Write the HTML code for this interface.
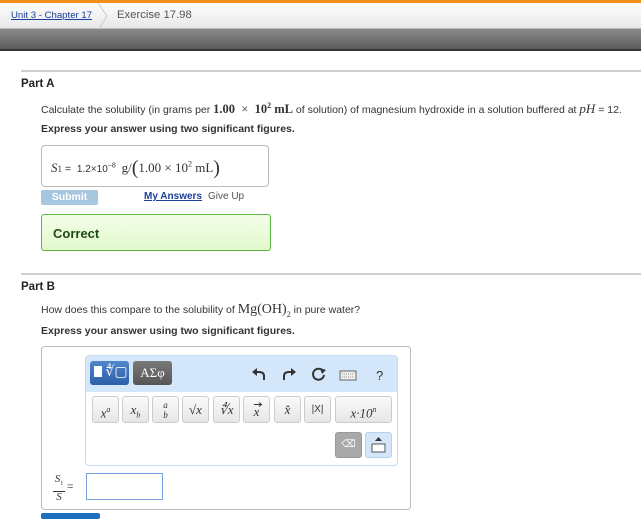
<!DOCTYPE html>
<html><head><style>
*{margin:0;padding:0;box-sizing:border-box}
body{width:641px;height:517px;overflow:hidden;background:#fff;font-family:"Liberation Sans",Arial,sans-serif;font-size:10.5px;color:#333;position:relative}
.a{position:absolute}
.serif{font-family:"Liberation Serif",serif}
.key{position:absolute;top:396px;height:27px;border:1px solid #ccc;border-radius:3px;background:linear-gradient(#fafafa,#e6e6e6);font-family:"Liberation Serif",serif;font-style:italic;font-size:13px;text-align:center;line-height:25px;color:#333}
</style></head><body>
<div class="a" style="left:0;top:0;width:641px;height:3px;background:#f39019"></div>
<div class="a" style="left:0;top:3px;width:641px;height:26px;background:linear-gradient(#fdfdfd,#e8e8e8);border-bottom:1px solid #bbb"></div>
<div class="a" style="left:11px;top:10px;font-size:9.6px;color:#1a3f9b;text-decoration:underline">Unit 3 - Chapter 17</div>
<svg class="a" style="left:96px;top:3px" width="14" height="27"><path d="M2 0 L11 13 L2 27" fill="none" stroke="#ccc" stroke-width="1"/></svg>
<div class="a" style="left:117px;top:9px;font-size:11.3px;color:#555">Exercise 17.98</div>
<div class="a" style="left:0;top:29px;width:641px;height:22px;background:linear-gradient(#8a8a8a,#5c5c5c);border-bottom:2px solid #333"></div>
<div class="a" style="left:21px;top:70px;width:620px;height:2px;background:#d0d0d0"></div>
<div class="a" style="left:21px;top:78px;font-weight:bold;font-size:11.5px;color:#222">Part A</div>
<div class="a" style="left:41px;top:101px;white-space:nowrap;font-size:10.5px">Calculate the solubility (in grams per <span class="serif" style="font-size:12.5px;font-weight:bold">1.00 &nbsp;<span style="font-weight:normal">×</span>&nbsp; 10<sup style="font-size:8px">2</sup> mL</span> of solution) of magnesium hydroxide in a solution buffered at <span class="serif" style="font-style:italic;font-size:13px">pH</span> = 12.</div>
<div class="a" style="left:41px;top:123px;font-weight:bold;color:#333">Express your answer using two significant figures.</div>
<div class="a" style="left:41px;top:145px;width:228px;height:42px;border:1px solid #bbb;border-radius:4px"></div>
<div class="a" style="left:51px;top:157px;white-space:nowrap"><span class="serif" style="font-style:italic;font-size:13px">S</span><span class="serif" style="font-size:9px">1</span> = &nbsp;<span style="font-size:10px">1.2×10<sup style="font-size:7px">−8</sup></span> &nbsp;<span class="serif" style="font-size:13px">g/<span style="font-size:20px;vertical-align:-2px">(</span>1.00 × 10<sup style="font-size:8px">2</sup> mL<span style="font-size:20px;vertical-align:-2px">)</span></span></div>
<div class="a" style="left:41px;top:190px;width:57px;height:15px;background:#a7c6e0;border-radius:2px;color:#fff;font-weight:bold;text-align:center;line-height:15px">Submit</div>
<div class="a" style="left:144px;top:191px;color:#1a3f9b;text-decoration:underline;font-weight:bold;font-size:10px">My Answers</div>
<div class="a" style="left:208px;top:191px;color:#555;font-size:10px">Give Up</div>
<div class="a" style="left:41px;top:214px;width:230px;height:37px;border:1px solid #5cb946;border-radius:3px;background:linear-gradient(#f3ffe8,#e2f8cc)"></div>
<div class="a" style="left:53px;top:226px;font-weight:bold;font-size:13px;color:#1d4a12">Correct</div>
<div class="a" style="left:21px;top:273px;width:620px;height:2px;background:#d0d0d0"></div>
<div class="a" style="left:21px;top:281px;font-weight:bold;font-size:11.5px;color:#222">Part B</div>
<div class="a" style="left:41px;top:302px;white-space:nowrap;font-size:10.5px">How does this compare to the solubility of <span class="serif" style="font-size:14px">Mg(OH)<sub style="font-size:8px">2</sub></span> in pure water?</div>
<div class="a" style="left:41px;top:325px;font-weight:bold;color:#333">Express your answer using two significant figures.</div>
<div class="a" style="left:41px;top:346px;width:370px;height:164px;border:1px solid #bbb;border-radius:4px"></div>
<div class="a" style="left:85px;top:355px;width:313px;height:111px;border:1px solid #c8dcef;border-radius:4px;background:#fff"></div>
<div class="a" style="left:86px;top:356px;width:311px;height:36px;background:#d3e6fa;border-radius:3px 3px 0 0"></div>
<div class="a" style="left:90px;top:361px;width:39px;height:24px;background:linear-gradient(#4f86cc,#2c5fa8);border-radius:3px;color:#fff;font-family:'Liberation Serif',serif;font-size:14px;line-height:24px;padding-left:4px"><span style="display:inline-block;width:8px;height:11px;background:#fff;vertical-align:-1px"></span> ∜▢</div>
<div class="a" style="left:133px;top:361px;width:39px;height:24px;background:linear-gradient(#7a7a7a,#555);border-radius:3px;color:#fff;font-family:'Liberation Serif',serif;font-size:13px;line-height:24px;text-align:center">ΑΣφ</div>
<svg class="a" style="left:250px;top:366px" width="140" height="18">
<path d="M14 14 V10 Q14 6 9 6 H5" fill="none" stroke="#333" stroke-width="2"/><path d="M2 6 L7 2 V10 Z" fill="#333"/>
<path d="M34 14 V10 Q34 6 39 6 H43" fill="none" stroke="#333" stroke-width="2"/><path d="M46 6 L41 2 V10 Z" fill="#333"/>
<path d="M73 5 A5.5 5.5 0 1 0 74 9" fill="none" stroke="#333" stroke-width="2"/><path d="M70 2 L76 4 L72 8 Z" fill="#333"/>
<rect x="90" y="5" width="16" height="9" fill="#eee" stroke="#666"/><path d="M92 8h12M92 11h12" stroke="#999" stroke-dasharray="1 1"/>
<text x="126" y="14" font-family="Liberation Sans" font-size="13" fill="#333">?</text>
</svg>
<div class="key" style="left:92px;width:27px">x<sup style="font-size:8px">a</sup></div>
<div class="key" style="left:122px;width:27px">x<sub style="font-size:8px">b</sub></div>
<div class="key" style="left:152px;width:27px;font-size:9px;line-height:10px;padding-top:3px">a<br>b</div>
<div class="key" style="left:182px;width:27px">√x</div>
<div class="key" style="left:213px;width:27px">∜x</div>
<div class="key" style="left:243px;width:27px;line-height:29px">x<svg class="a" style="left:9px;top:5px" width="10" height="5"><path d="M1 2.5H8M6 0.5L8.5 2.5L6 4.5" fill="none" stroke="#333" stroke-width="1"/></svg></div>
<div class="key" style="left:274px;width:27px">x̂</div>
<div class="key" style="left:304px;width:27px;font-family:'Liberation Sans';font-style:normal;font-size:10px">|X|</div>
<div class="key" style="left:335px;width:57px">x·10<sup style="font-size:8px">n</sup></div>
<div class="a" style="left:335px;top:432px;width:27px;height:26px;background:#a9a9a9;border-radius:3px;border:1px solid #999;color:#fff;text-align:center;line-height:24px;font-size:10px">⌫</div>
<div class="a" style="left:365px;top:432px;width:27px;height:26px;background:#d3e6fa;border-radius:3px;border:1px solid #b8d0ea"><svg width="25" height="24"><path d="M9 8 L12.5 4 L16 8Z" fill="#333"/><rect x="6" y="11" width="13" height="8" fill="#fff" stroke="#555"/></svg></div>
<div class="a serif" style="left:53px;top:474px;font-style:italic;font-size:11px;line-height:11px;text-align:center;width:12px">S<sub style="font-size:6px;font-style:normal">1</sub><div style="border-top:1px solid #333;margin-top:1px">S</div></div>
<div class="a" style="left:67px;top:481px;font-size:11px;color:#555">=</div>
<div class="a" style="left:86px;top:473px;width:77px;height:27px;border:1px solid #7a9fde"></div>
<div class="a" style="left:41px;top:513px;width:59px;height:6px;background:#1f6fc0;border-radius:2px"></div>
</body></html>
